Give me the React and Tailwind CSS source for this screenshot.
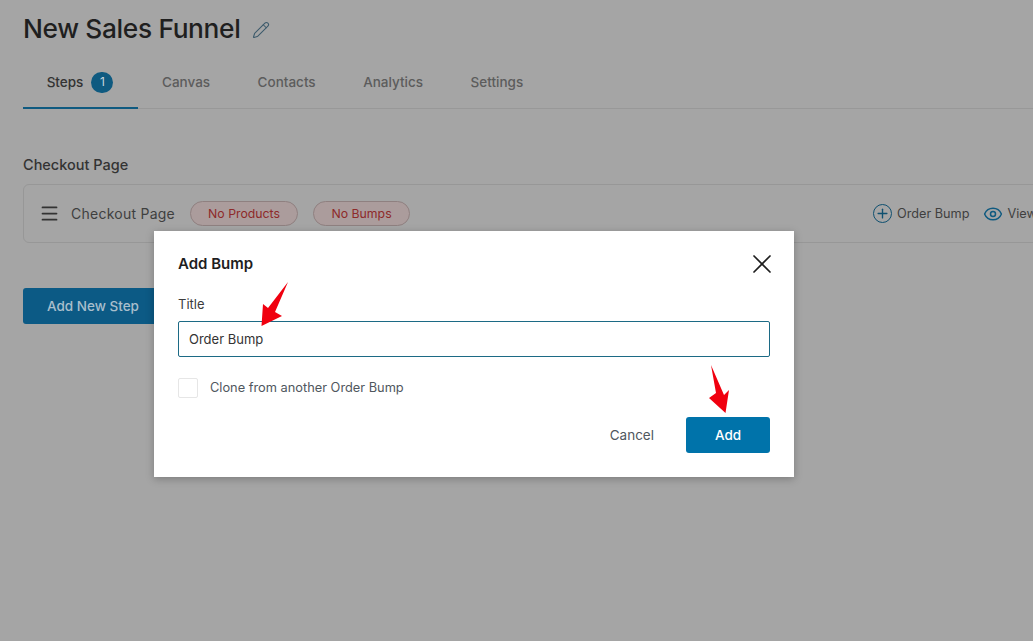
import { Plus, Eye, Menu, X, Pencil } from 'lucide-react';

const TABS = ['Canvas', 'Contacts', 'Analytics', 'Settings'];

function Arrow({ className, box, points }) {
  return (
    <svg viewBox={box} className={className} aria-hidden="true">
      <polygon points={points} fill="#f0000f" />
    </svg>
  );
}

export default function App() {
  return (
    <div className="relative h-[641px] w-[1033px] overflow-hidden bg-[#a5a5a5] font-['Inter','Liberation_Sans',sans-serif] text-[#3f3f3f]">
      <div className="pl-[23px]">
        {/* header */}
        <div className="flex h-[60px] items-center pb-[1px]">
          <h1 className="text-[26.3px] font-medium leading-none tracking-[-0.35px] text-[#1f1f1f]">New Sales Funnel</h1>
          <Pencil className="ml-[12px] mt-[1px] h-[18px] w-[18px] text-[#3c5a6b]" strokeWidth={1.4} />
        </div>

        {/* tabs */}
        <div className="flex h-[49px] border-b border-[#989898]">
          <div className="-mb-px flex h-[49px] w-[115px] items-center justify-center gap-[8px] border-b-2 border-[#0f5a80] pb-[3px] pr-[1px]">
            <span className="text-[13.5px] font-medium text-[#333]">Steps</span>
            <span className="flex h-[21px] w-[22px] items-center justify-center rounded-full bg-[#0f5a80] text-[12px] text-[#c8d6de]">1</span>
          </div>
          <div className="flex gap-[47.5px] pl-[24px] pt-[12px]">
            {TABS.map((t) => (
              <span key={t} className="text-[13.5px] font-medium text-[#5c5c5c]">{t}</span>
            ))}
          </div>
        </div>

        {/* step */}
        <h2 className="mt-[46px] text-[14.5px] font-medium leading-[20px] text-[#333]">Checkout Page</h2>
        <div className="mt-[9px] flex h-[59px] w-[1060px] items-center rounded-[6px] border border-[#979797] pl-[15px]">
          <Menu className="h-[21px] w-[21px] text-[#333]" strokeWidth={2} />
          <span className="ml-[11px] text-[14px] tracking-[0.25px] text-[#3f3f3f]">Checkout Page</span>
          <span className="ml-[15px] flex h-[25px] w-[108px] items-center justify-center rounded-full border border-[#8f8080] bg-[#ab9c9c] pt-px text-[12.3px] text-[#8e2a2a]">No Products</span>
          <span className="ml-[15px] flex h-[25px] w-[97px] items-center justify-center rounded-full border border-[#8f8080] bg-[#ab9c9c] pt-px text-[12.3px] text-[#8e2a2a]">No Bumps</span>
          <div className="ml-[463px] flex items-center">
            <Plus className="h-[19px] w-[19px] rounded-full border-[1.5px] border-[#0f5070] p-[1px] text-[#0f5070]" strokeWidth={2.2} />
            <span className="ml-[5px] text-[12.7px] text-[#3f3f3f]">Order Bump</span>
            <Eye className="ml-[13px] h-[20px] w-[20px] text-[#0f5a80]" strokeWidth={1.8} />
            <span className="ml-[5px] text-[12.7px] text-[#3f3f3f]">View</span>
          </div>
        </div>

        <button className="mt-[45px] flex h-[36px] w-[150px] items-center rounded-[3px] bg-[#0c5a85] pl-[24px] pt-px text-[13.5px] font-medium text-[#a9bfcc]">
          Add New Step
        </button>
      </div>

      {/* modal */}
      <div className="absolute left-[154px] top-[231px] h-[246px] w-[640px] bg-white px-[24px] pt-[23px] shadow-[0_2px_8px_rgba(0,0,0,0.25)]">
        <div className="flex h-[20px] items-center justify-between">
          <h3 className="text-[15px] font-semibold leading-[20px] text-[#1e1e1e]">Add Bump</h3>
          <X className="-mr-[8px] h-[32px] w-[32px] text-[#1e1e1e]" strokeWidth={1.3} />
        </div>
        <label className="mt-[22px] block text-[13px] leading-[16px] text-[#3c3c3c]">Title</label>
        <div className="mt-[9px] flex h-[36px] items-center rounded-[2px] border border-[#1c6a85] pl-[10px] pt-[1px] text-[13px] text-[#333]">Order Bump</div>
        <div className="mt-[21px] flex items-center">
          <span className="h-[20px] w-[20px] rounded-[2px] border border-[#e6e6e6]" />
          <span className="ml-[12px] text-[12.8px] text-[#50575e]">Clone from another Order Bump</span>
        </div>
        <div className="mt-[19px] flex items-center justify-end">
          <span className="text-[13.5px] text-[#50575e]">Cancel</span>
          <button className="ml-[32px] h-[36px] w-[84px] rounded-[3px] bg-[#0073aa] text-[13.5px] font-medium text-white">Add</button>
        </div>
      </div>

      {/* annotation arrows */}
      <Arrow className="absolute left-[255px] top-[278px] h-[55px] w-[40px]" box="0 0 40 55" points="33,4 20,34 27,38 6.5,48 8,26 13,30" />
      <Arrow className="absolute left-[705px] top-[360px] h-[60px] w-[30px]" box="0 0 30 60" points="6,5 19,35 24,30 20.5,53 4,38 11,33" />
    </div>
  );
}
